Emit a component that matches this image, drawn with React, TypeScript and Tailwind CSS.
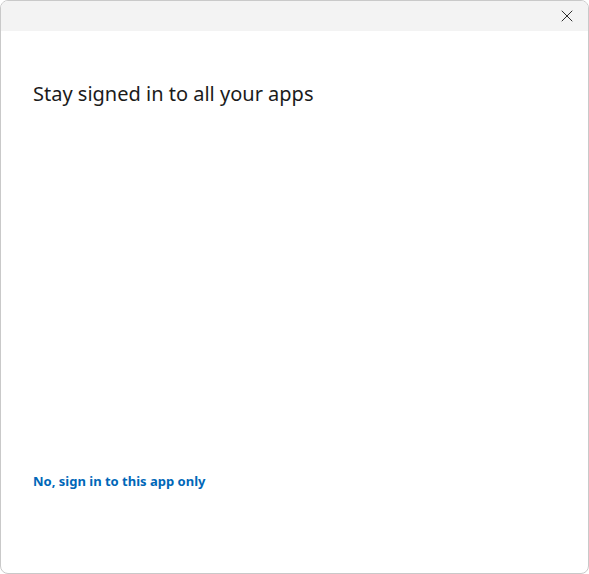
import { X } from "lucide-react";

// Account prompt dialog: title bar with close button, heading and a single link
export default function App() {
  return (
    <div className="w-[589px] h-[574px] bg-white font-['Noto_Sans',sans-serif]">
      <div className="flex h-full flex-col overflow-hidden rounded-lg border border-[#c9c9c9] bg-white">
        <div className="flex h-[30px] shrink-0 items-center justify-end bg-[#f3f3f3] pr-[11px]">
          <X size={20} strokeWidth={1.1} className="text-[#1a1a1a]" />
        </div>
        <div className="flex flex-1 flex-col px-8 pt-[49px]">
          <h1 className="text-[20px] leading-[28px] font-normal text-[#1b1b1b]">
            Stay signed in to all your apps
          </h1>
          <div className="flex-1" />
          <a href="#" className="mb-[83px] text-[13px] font-bold leading-[18px] text-[#0067b8]">
            No, sign in to this app only
          </a>
        </div>
      </div>
    </div>
  );
}
